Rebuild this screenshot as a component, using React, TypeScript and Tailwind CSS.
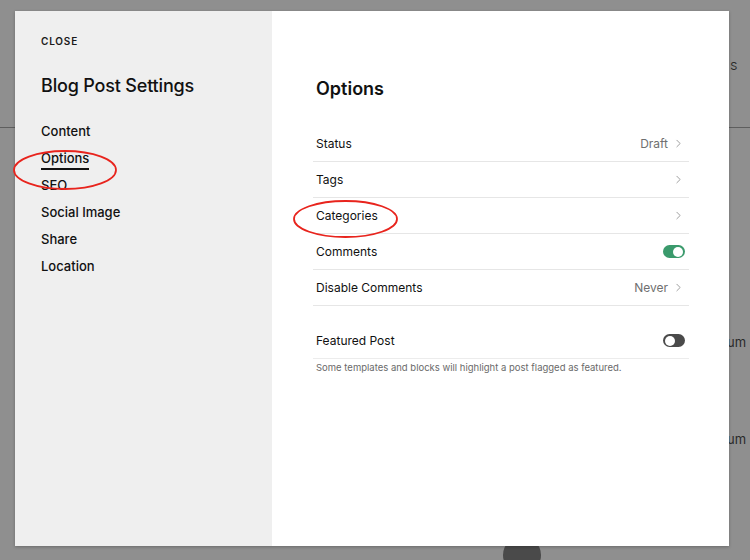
import { ChevronRight } from 'lucide-react';

const nav = ['Content', 'Options', 'SEO', 'Social Image', 'Share', 'Location'];

const rows = [
  { label: 'Status', value: 'Draft', kind: 'link' },
  { label: 'Tags', value: '', kind: 'link' },
  { label: 'Categories', value: '', kind: 'link' },
  { label: 'Comments', value: '', kind: 'on' },
  { label: 'Disable Comments', value: 'Never', kind: 'link' },
];

function Toggle({ on }: { on: boolean }) {
  return (
    <span
      className={`flex h-[13px] w-[22px] items-center rounded-full px-[2px] ${
        on ? 'justify-end bg-[#3a9a6c]' : 'justify-start bg-[#4a4a4a]'
      }`}
    >
      <span className="h-[10px] w-[10px] rounded-full bg-white" />
    </span>
  );
}

function Scribble({ w, h }: { w: number; h: number }) {
  return (
    <svg width={w} height={h} viewBox={`0 0 ${w} ${h}`} fill="none">
      <ellipse cx={w / 2} cy={h / 2} rx={w / 2 - 2} ry={h / 2 - 2} stroke="#e8241d" strokeWidth="1.8" />
    </svg>
  );
}

export default function App() {
  return (
    <div
      className="relative h-[560px] w-[750px] overflow-hidden bg-[#8f8f8f] text-[#111]"
      style={{ fontFamily: 'Inter, "Liberation Sans", sans-serif' }}
    >
      {/* page behind the dialog */}
      <div className="absolute left-0 right-0 top-[127px] h-px bg-[#5e5e5e]" />
      <span className="absolute left-[722px] top-[58px] text-[11px] tracking-[0.15em] text-[#2a2a2a]">ES</span>
      <span className="absolute left-[727px] top-[333px] text-[13px] text-[#2a2a2a]">um</span>
      <span className="absolute left-[727px] top-[430px] text-[13px] text-[#2a2a2a]">um</span>
      <div className="absolute left-[503px] top-[536px] h-[38px] w-[38px] rounded-full bg-[#4a4a4a]" />

      {/* dialog */}
      <div className="absolute left-[15px] top-[11px] flex h-[535px] w-[714px] shadow-[0_1px_3px_rgba(0,0,0,0.25)]">
        <aside className="w-[257px] bg-[#efefef] pl-[26px] pt-[23px]">
          <p className="text-[10px] font-semibold tracking-[0.08em] text-[#1a1a1a]">CLOSE</p>
          <h1 className="mt-[23px] text-[18px] font-medium tracking-[-0.01em]">Blog Post Settings</h1>
          <nav className="mt-[23px] flex flex-col">
            {nav.map((item) => (
              <span key={item} className="h-[27px] text-[13px] font-medium leading-[18px]">
                <span className={item === 'Options' ? 'border-b-2 border-[#111] pb-[2px]' : ''}>{item}</span>
              </span>
            ))}
          </nav>
        </aside>

        <main className="flex-1 bg-white pl-[41px] pt-[66px]">
          <h2 className="pl-[3px] text-[18px] font-semibold leading-6">Options</h2>
          <div className="mt-[25px] w-[376px]">
            {rows.map((row) => (
              <div
                key={row.label}
                className="flex h-[36px] items-center justify-between border-b border-[#e6e6e6] pl-[3px] pr-[4px] text-[12px]"
              >
                <span>{row.label}</span>
                {row.kind === 'on' ? (
                  <Toggle on />
                ) : (
                  <span className="flex items-center gap-[4px] text-[#6f6f6f]">
                    {row.value}
                    <ChevronRight size={13} strokeWidth={1.3} className="text-[#777]" />
                  </span>
                )}
              </div>
            ))}

            <div className="mt-[17px] flex h-[36px] items-center justify-between border-b border-[#ececec] pl-[3px] pr-[4px] text-[12px]">
              <span>Featured Post</span>
              <Toggle on={false} />
            </div>
            <p className="mt-[2px] pl-[3px] text-[9.5px] text-[#6a6a6a]">
              Some templates and blocks will highlight a post flagged as featured.
            </p>
          </div>
        </main>
      </div>

      {/* red annotation rings */}
      <div className="absolute left-[12px] top-[149px]">
        <Scribble w={106} h={42} />
      </div>
      <div className="absolute left-[292px] top-[199px]">
        <Scribble w={107} h={40} />
      </div>
    </div>
  );
}
